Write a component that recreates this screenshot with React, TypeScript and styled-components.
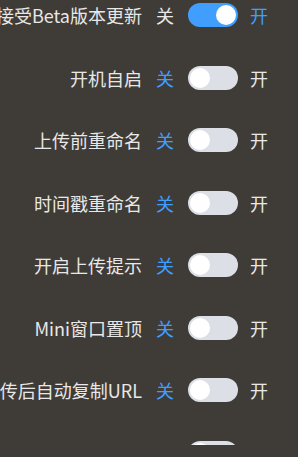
import React from "react";
import styled, { createGlobalStyle } from "styled-components";

const Global = createGlobalStyle`
  html, body {
    margin: 0;
    padding: 0;
    background: #3f3b36;
    overflow: hidden;
  }
  body {
    font-family: "Noto Sans CJK SC", "Noto Sans", sans-serif;
  }
`;

const Screen = styled.div`
  width: 298px;
  height: 457px;
  background: #3f3b36;
`;

const Page = styled.div`
  height: 445px;
  overflow: hidden;
  display: flex;
  flex-direction: column;
  gap: 38.5px;
  padding-top: 3px;
  box-sizing: border-box;
`;

const Row = styled.div`
  display: flex;
  align-items: center;
  height: 24px;
  flex-shrink: 0;
`;

const Label = styled.div`
  width: 142px;
  flex-shrink: 0;
  display: flex;
  justify-content: flex-end;
  white-space: nowrap;
  font-size: 18px;
  line-height: 24px;
  color: #e8e8e8;
`;

const Side = styled.span<{ $active: boolean; $gapLeft: number; $gapRight: number }>`
  font-size: 18px;
  line-height: 24px;
  margin-left: ${(p) => p.$gapLeft}px;
  margin-right: ${(p) => p.$gapRight}px;
  color: ${(p) => (p.$active ? "#409eff" : "#e8e8e8")};
`;

const Track = styled.div<{ $on: boolean }>`
  position: relative;
  width: 50px;
  height: 24px;
  border-radius: 12px;
  background: ${(p) => (p.$on ? "#409eff" : "#dcdfe6")};
  flex-shrink: 0;
`;

const Knob = styled.div<{ $on: boolean }>`
  position: absolute;
  top: 2px;
  left: ${(p) => (p.$on ? "28px" : "2px")};
  width: 20px;
  height: 20px;
  border-radius: 50%;
  background: #ffffff;
`;

const items: { label: string; on: boolean }[] = [
  { label: "接受Beta版本更新", on: true },
  { label: "开机自启", on: false },
  { label: "上传前重命名", on: false },
  { label: "时间戳重命名", on: false },
  { label: "开启上传提示", on: false },
  { label: "Mini窗口置顶", on: false },
  { label: "上传后自动复制URL", on: false },
  { label: "选择显示的图床", on: false },
];

export default function App() {
  return (
    <>
      <Global />
      <Screen>
        <Page>
          {items.map((it) => (
            <Row key={it.label}>
              <Label>{it.label}</Label>
              <Side $active={!it.on} $gapLeft={14} $gapRight={14}>
                关
              </Side>
              <Track $on={it.on}>
                <Knob $on={it.on} />
              </Track>
              <Side $active={it.on} $gapLeft={12} $gapRight={0}>
                开
              </Side>
            </Row>
          ))}
        </Page>
      </Screen>
    </>
  );
}
